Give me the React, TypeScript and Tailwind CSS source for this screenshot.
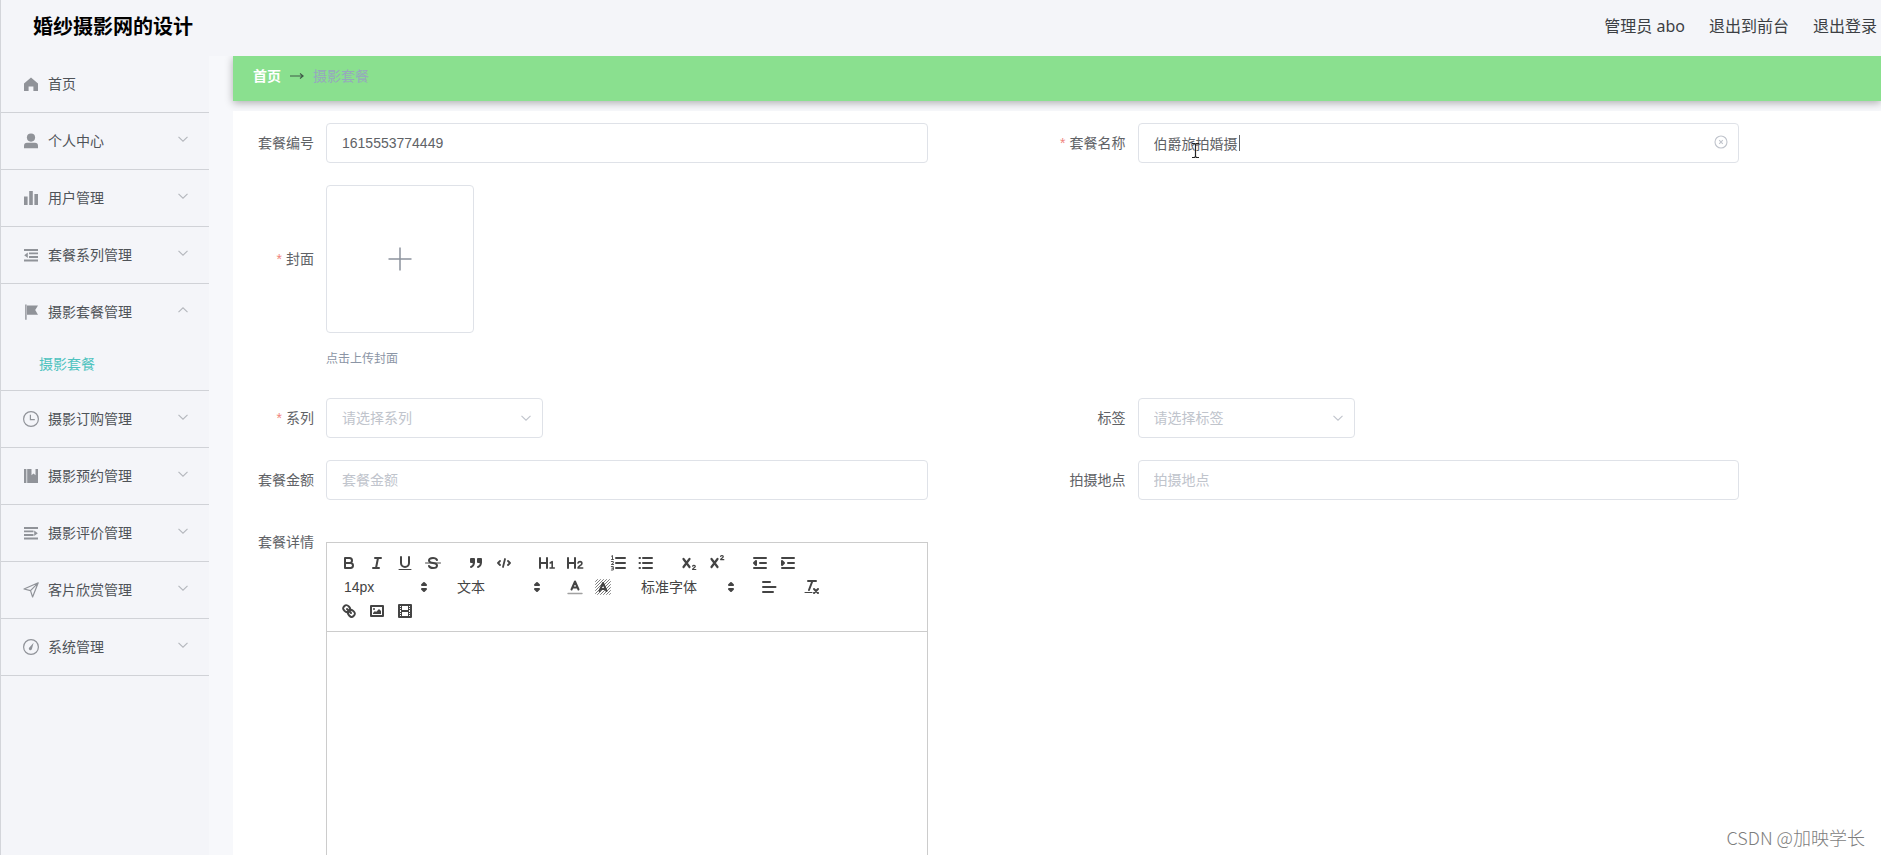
import React, { useState } from "react";
import type { ReactNode } from "react";

const inputBase =
  "h-10 w-full rounded border border-[#dfe2e8] bg-white px-[15px] text-sm text-[#606266] placeholder:text-[#c0c4cc] outline-none";

/* ---------- sidebar ---------- */

const menuIcons: Record<string, ReactNode> = {
  home: <path d="M9 2.6 2 8.4V16h4.6v-4.6h4.8V16H16V8.4z" fill="currentColor" />,
  user: (
    <g fill="currentColor">
      <circle cx="9" cy="5.6" r="4.1" />
      <path d="M2 16.2v-2.4c0-1.9 1.2-3 3-3h8c1.8 0 3 1.1 3 3v2.4z" />
    </g>
  ),
  chart: <path d="M2 7.5h3.6V16H2zM7.2 2h3.6v14H7.2zM12.4 5H16v11h-3.6z" fill="currentColor" />,
  fold: (
    <path d="M2 3h14v2H2zM7 6.4h9v1.9H7zM7 10h9v1.9H7zM2 13.400h14v2H2zM5.800 6.400v5.600L2.200 9.200z" fill="currentColor" />
  ),
  flag: <path d="M3.2 1.5h1.4v15.2H3.2zM5 2.4h11l-2.8 4.7L16 11.8H5z" fill="currentColor" />,
  clock: (
    <g fill="none" stroke="currentColor" strokeWidth="1.2">
      <circle cx="9" cy="9" r="7.4" />
      <path d="M8.4 4.8v4.8h4.4" />
    </g>
  ),
  book: <path d="M2 2h2.400v14H2zM5.200 2h4.300v6.200l2-1.700 2 1.700V2H16v14H5.200z" fill="currentColor" />,
  unfold: (
    <path d="M2 3h14v2H2zM2 6.400h9.500v1.900H2zM2 10h9.500v1.900H2zM2 13.400h14v2H2zM12.200 6.400v5.600l3.600-2.800z" fill="currentColor" />
  ),
  position: (
    <path d="M16.2 1.8 2 8l6.5 1.6L10.6 16z M16.2 1.8 8.5 9.6" fill="none" stroke="currentColor" strokeWidth="1.2" strokeLinejoin="round" />
  ),
  odometer: (
    <g fill="none" stroke="currentColor" strokeWidth="1.2">
      <circle cx="9" cy="9" r="7.4" />
      <path d="M11.6 4.8 7.6 9.2a1.6 1.6 0 1 0 2.4 1.6z" fill="currentColor" stroke="none" />
    </g>
  ),
};

const menu = [
  { label: "首页", icon: "home" },
  { label: "个人中心", icon: "user", arrow: true },
  { label: "用户管理", icon: "chart", arrow: true },
  { label: "套餐系列管理", icon: "fold", arrow: true },
  { label: "摄影套餐管理", icon: "flag", arrow: true, children: ["摄影套餐"] },
  { label: "摄影订购管理", icon: "clock", arrow: true },
  { label: "摄影预约管理", icon: "book", arrow: true },
  { label: "摄影评价管理", icon: "unfold", arrow: true },
  { label: "客片欣赏管理", icon: "position", arrow: true },
  { label: "系统管理", icon: "odometer", arrow: true },
];

function Chevron({ up = false, className = "" }: { up?: boolean; className?: string }) {
  return (
    <svg viewBox="0 0 12 12" className={`h-3 w-3 ${className}`} fill="none" stroke="currentColor" strokeWidth="1.1" aria-hidden="true">
      <path d={up ? "M1.5 8.2 6 3.8l4.5 4.4" : "M1.5 3.8 6 8.2l4.5-4.4"} />
    </svg>
  );
}

function Sidebar() {
  return (
    <nav className="w-[208px] shrink-0 bg-[#f4f5f9]">
      <ul>
        {menu.map((item) => (
          <li key={item.label} className="border-b border-[#d0d2d7]">
            <button type="button" className="flex h-14 w-full items-center pl-[18px] pr-5 text-left text-sm text-[#4f5358]">
              <span className="mr-[5px] flex w-6 justify-center text-[#909399]">
                <svg viewBox="0 0 18 18" className="h-[18px] w-[18px]" aria-hidden="true">
                  {menuIcons[item.icon]}
                </svg>
              </span>
              <span className="flex-1">{item.label}</span>
              {item.arrow && <Chevron up={!!item.children} className="mb-1 text-[#b4b7bd]" />}
            </button>
            {item.children?.map((child) => (
              <a key={child} href="#package" className="flex h-[50px] items-center pb-0.5 pl-[38px] text-sm text-[#4fc3bf]">
                {child}
              </a>
            ))}
          </li>
        ))}
      </ul>
    </nav>
  );
}

/* ---------- form pieces ---------- */

function Field({
  label,
  htmlFor,
  required = false,
  children,
}: {
  label: string;
  htmlFor: string;
  required?: boolean;
  children: ReactNode;
}) {
  return (
    <div className="flex items-start pr-[130px]">
      <label htmlFor={htmlFor} className="w-20 shrink-0 whitespace-nowrap pr-3 text-right text-sm leading-10 text-[#606266]">
        {required && <span className="mr-1 text-[#f0857d]">*</span>}
        {label}
      </label>
      <div className="min-w-0 flex-1">{children}</div>
    </div>
  );
}

function SelectBox({ id, placeholder }: { id: string; placeholder: string }) {
  return (
    <div className="relative w-[217px]">
      <select id={id} defaultValue="" className="h-10 w-full appearance-none rounded border border-[#dfe2e8] bg-white px-[15px] text-sm text-[#c0c4cc] outline-none">
        <option value="">{placeholder}</option>
      </select>
      <Chevron className="pointer-events-none absolute right-[11px] top-[14px] text-[#c0c4cc]" />
    </div>
  );
}

/* ---------- rich text editor ---------- */

const toolIcons: Record<string, ReactNode> = {
  加粗: <path d="M5 4h4.5a2.5 2.5 0 0 1 0 5H5zM5 9h5.5a2.5 2.5 0 0 1 0 5H5z" />,
  斜体: <path d="M7 4h6M5 14h6M8 14l2-10" />,
  下划线: (
    <>
      <path d="M5 3v6a4 4 0 0 0 8 0V3" />
      <path d="M3 15.5h12" strokeWidth="1" />
    </>
  ),
  删除线: (
    <>
      <path d="M13 6C12.4 4.700 10.900 4 9 4 6.700 4 5 5.100 5 6.500 5 8 6.300 8.700 9 9c2.700.3 4 1 4 2.500C13 12.900 11.300 14 9 14c-1.900 0-3.400-.7-4-2" />
      <path d="M1.500 9h15" strokeWidth="1" />
    </>
  ),
  引用: (
    <>
      <path d="M4 5h3v3H4zM11 5h3v3h-3z" fill="currentColor" />
      <path d="M7 8c0 4-3 5-3 5M14 8c0 4-3 5-3 5" />
    </>
  ),
  代码: <path d="M5 7 3 9l2 2M13 7l2 2-2 2M10 5 8 13" strokeWidth="1.800" />,
  一级标题: (
    <>
      <path d="M2 4v10M9 4v10M2 9h7" />
      <path d="M12.200 9 14.200 7.600V14M12 14h4.300" strokeWidth="1.600" />
    </>
  ),
  二级标题: (
    <>
      <path d="M2 4v10M9 4v10M2 9h7" />
      <path d="M12 9c.3-1 1.100-1.400 2-1.400 1.200 0 1.900.8 1.900 1.800 0 1.900-3.700 2.600-3.900 4.600h4.700" strokeWidth="1.600" />
    </>
  ),
  有序列表: (
    <>
      <path d="M7 4h9M7 9h9M7 14h9" />
      <path d="M2.500 2.200l1-.7v4M2.500 5.500h2M2.300 7.500h2v1.600l-2 1.400h2.300M2.300 12.500h2v3.500h-2M2.800 14.200h1.500" strokeWidth=".9" />
    </>
  ),
  无序列表: <path d="M6 4h9M6 9h9M6 14h9M2.500 4h.5M2.500 9h.5M2.500 14h.5" />,
  下标: (
    <>
      <path d="M3.500 5l6 8M9.500 5l-6 8" strokeWidth="2.200" />
      <path d="M12.600 12.200c.4-1.200 2.700-1.100 2.700.3 0 1-2.400 1.500-2.700 3h3.200" strokeWidth="1.200" />
    </>
  ),
  上标: (
    <>
      <path d="M3.500 5l6 8M9.500 5l-6 8" strokeWidth="2.200" />
      <path d="M12.600 2.400c.4-1.200 2.700-1.100 2.700.3 0 1-2.400 1.500-2.700 3h3.200" strokeWidth="1.200" />
    </>
  ),
  减少缩进: (
    <>
      <path d="M3 14h12M3 4h12M9 9h6" />
      <path d="M5 7v4L3 9z" fill="currentColor" />
    </>
  ),
  增加缩进: (
    <>
      <path d="M3 14h12M3 4h12M9 9h6" />
      <path d="M3 7v4l2-2z" fill="currentColor" />
    </>
  ),
  文字颜色: (
    <>
      <path d="M5.500 11.500 9 3.500l3.500 8M11.600 9.500H6.400" />
      <path d="M2 15.500h14" strokeWidth="1.400" opacity=".5" />
    </>
  ),
  背景颜色: (
    <>
      <path
        d="M1.500 3.500l2-2M1.500 6.500l5-5M1.500 9.500l8-8M1.500 12.500l11-11M1.500 15.500l14-14M3.500 16.500l13-13M6.500 16.500l10-10M9.500 16.500l7-7M12.500 16.500l4-4M15.500 16.500l1-1"
        strokeWidth=".7"
      />
      <path d="M5.500 13 9 5l3.500 8M11.600 11H6.400" />
    </>
  ),
  对齐: <path d="M3 9h12.500M3 14h10M3 4h7" />,
  清除格式: (
    <>
      <path d="M5 3h8M6 12 9.400 3M11 11l4 4M15 11l-4 4" />
      <path d="M2 14.500h7" strokeWidth="1" />
    </>
  ),
  链接: (
    <>
      <path d="M7 7l4 4" />
      <path d="M8.900 4.577a3.476 3.476 0 0 1 .36 4.679A3.476 3.476 0 0 1 4.577 8.900C3.185 7.500 2.035 6.400 4.217 4.217S7.500 3.185 8.900 4.577Z" />
      <path d="M13.423 9.100a3.476 3.476 0 0 0-4.679-.36 3.476 3.476 0 0 0 .36 4.679c1.392 1.392 2.500 2.542 4.679.36S14.815 10.500 13.423 9.100Z" />
    </>
  ),
  图片: (
    <>
      <rect x="3" y="4" width="12" height="10" />
      <circle cx="6" cy="7" r="1" fill="currentColor" stroke="none" />
      <path d="M5 12v-1l2-2 1 1 3-3 2 2v3z" fill="currentColor" stroke="none" />
    </>
  ),
  视频: (
    <>
      <rect x="3" y="3" width="12" height="12" />
      <path d="M5 3h1v12H5zM12 3h1v12h-1zM5 8h8v2H5zM3 5h3v1H3zM3 7h3v1H3zM3 10h3v1H3zM3 12h3v1H3zM12 5h3v1h-3zM12 7h3v1h-3zM12 10h3v1h-3zM12 12h3v1h-3z" fill="currentColor" stroke="none" />
    </>
  ),
};

function Tools({ names }: { names: string[] }) {
  return (
    <div className="mr-[15px] flex">
      {names.map((name) => (
        <button key={name} type="button" aria-label={name} className="flex h-6 w-7 items-center justify-center text-[#444]">
          <svg viewBox="0 0 18 18" className="h-[18px] w-[18px]" fill="none" stroke="currentColor" strokeWidth="2" strokeLinecap="round" strokeLinejoin="round" aria-hidden="true">
            {toolIcons[name]}
          </svg>
        </button>
      ))}
    </div>
  );
}

function Picker({ label, value, width }: { label: string; value: string; width: string }) {
  return (
    <div className={`relative mr-[15px] h-6 ${width}`}>
      <select aria-label={label} className="h-6 w-full appearance-none bg-transparent pl-[9px] text-sm text-[#444] outline-none">
        <option>{value}</option>
      </select>
      <svg viewBox="0 0 18 18" className="pointer-events-none absolute right-0 top-[3px] h-[18px] w-[18px] fill-[#444] stroke-[#444]" strokeWidth="2" strokeLinejoin="round" aria-hidden="true">
        <path d="M7 11l2 2 2-2zM7 7l2-2 2 2z" />
      </svg>
    </div>
  );
}

function Editor() {
  return (
    <div className="mt-5 border border-[#ccc]">
      <div className="flex flex-wrap border-b border-[#ccc] p-2">
        <Tools names={["加粗", "斜体", "下划线", "删除线"]} />
        <Tools names={["引用", "代码"]} />
        <Tools names={["一级标题", "二级标题"]} />
        <Tools names={["有序列表", "无序列表"]} />
        <Tools names={["下标", "上标"]} />
        <Tools names={["减少缩进", "增加缩进"]} />
        <Picker label="字号" value="14px" width="w-[98px]" />
        <Picker label="标题" value="文本" width="w-[98px]" />
        <Tools names={["文字颜色", "背景颜色"]} />
        <Picker label="字体" value="标准字体" width="w-[108px]" />
        <Tools names={["对齐"]} />
        <Tools names={["清除格式"]} />
        <Tools names={["链接", "图片", "视频"]} />
      </div>
      <textarea id="detail" className="block h-[400px] w-full resize-none px-[15px] py-3 text-sm outline-none" />
    </div>
  );
}

/* ---------- page ---------- */

export default function App() {
  const [name, setName] = useState("伯爵旅拍婚摄");
  return (
    <div className="relative flex h-screen flex-col overflow-hidden border-l border-[#d3d5da] bg-[#f7f8fb] font-['Liberation_Sans','Noto_Sans_CJK_SC',sans-serif]">
      <header className="flex h-14 shrink-0 items-center justify-between bg-[#f4f5f9] pb-0.5 pl-8 pr-1">
        <h1 className="text-xl font-bold text-black">婚纱摄影网的设计</h1>
        <div className="flex items-center gap-6 pb-0.5 font-['Noto_Sans','Noto_Sans_CJK_SC',sans-serif] text-base text-[#3c3f44]">
          <span>管理员 abo</span>
          <a href="#front">退出到前台</a>
          <a href="#logout">退出登录</a>
        </div>
      </header>

      <div className="flex min-h-0 flex-1">
        <Sidebar />
        <main className="min-w-0 flex-1 overflow-y-auto pl-6 [scrollbar-width:none]">
          <div className="flex h-[45px] items-center bg-[#8ae08f] px-5 pb-1.5 text-sm shadow-[0_2px_8px_rgba(0,0,0,0.3)]">
            <a href="#home" className="font-bold text-white">首页</a>
            <svg viewBox="0 0 14 10" className="mx-[9px] h-[10px] w-[14px]" fill="none" stroke="#3f5a48" strokeWidth="1.1" aria-hidden="true">
              <path d="M0 5h13M10 2.500 13.200 5 10 7.500" />
            </svg>
            <span className="text-[#97a8be]">摄影套餐</span>
          </div>

          <form className="mt-[10px] grid grid-cols-2 gap-y-[22px] bg-white pb-6 pl-[13px] pr-3 pt-3">
            <Field label="套餐编号" htmlFor="code">
              <input id="code" readOnly value="1615553774449" className={inputBase} />
            </Field>
            <Field label="套餐名称" htmlFor="name" required>
              <div className="relative">
                <input id="name" value={name} onChange={(e) => setName(e.target.value)} className={inputBase} />
                <span className="absolute left-[101px] top-3 h-4 w-px bg-[#606266]" />
                <svg viewBox="0 0 9 17" className="absolute left-[53px] top-[19px] h-[17px] w-[9px]" fill="none" stroke="#222" strokeWidth="1.200" aria-hidden="true">
                  <path d="M1 1.500h2.500l1 1 1-1H8M4.500 2v13M1 15.500h2.500l1-1 1 1H8" />
                </svg>
                <button type="button" aria-label="清空" onClick={() => setName("")} className="absolute right-[11px] top-3 text-[#c0c4cc]">
                  <svg viewBox="0 0 14 14" className="h-[14px] w-[14px]" fill="none" stroke="currentColor" strokeWidth="1.100">
                    <circle cx="7" cy="7" r="6" />
                    <path d="M5.200 5.200l3.600 3.600M8.800 5.200 5.200 8.800" />
                  </svg>
                </button>
              </div>
            </Field>

            <div className="col-span-2">
              <div className="flex items-center">
                <label htmlFor="cover" className="w-20 shrink-0 pr-3 text-right text-sm text-[#606266]">
                  <span className="mr-1 text-[#f0857d]">*</span>封面
                </label>
                <button id="cover" type="button" aria-label="上传封面" className="flex h-[148px] w-[148px] items-center justify-center rounded border border-[#dfe2e8] text-[#8c939d]">
                  <svg viewBox="0 0 24 24" className="h-6 w-6" fill="none" stroke="currentColor" strokeWidth="1.500" aria-hidden="true">
                    <path d="M12 .5v23M.5 12h23" />
                  </svg>
                </button>
              </div>
              <p className="h-[43px] pl-20 pt-2 text-xs leading-9 text-[#8b95a5]">点击上传封面</p>
            </div>

            <Field label="系列" htmlFor="series" required>
              <SelectBox id="series" placeholder="请选择系列" />
            </Field>
            <Field label="标签" htmlFor="tag">
              <SelectBox id="tag" placeholder="请选择标签" />
            </Field>

            <Field label="套餐金额" htmlFor="price">
              <input id="price" placeholder="套餐金额" className={inputBase} />
            </Field>
            <Field label="拍摄地点" htmlFor="place">
              <input id="place" placeholder="拍摄地点" className={inputBase} />
            </Field>

            <Field label="套餐详情" htmlFor="detail">
              <Editor />
            </Field>
          </form>
        </main>
      </div>

      <p className="absolute bottom-1.5 right-4 font-['Noto_Sans_CJK_SC',sans-serif] text-lg font-light leading-6 text-[#7d7d7d]">CSDN @加映学长</p>
    </div>
  );
}
